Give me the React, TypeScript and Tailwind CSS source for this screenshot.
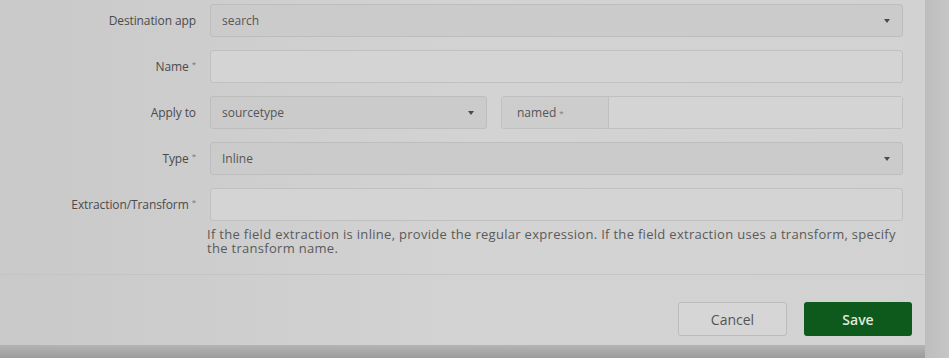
import React from "react";

function Caret() {
  return (
    <svg width="6" height="4" viewBox="0 0 6 4" className="shrink-0">
      <path d="M0 0 H6 L3 4 Z" fill="#4a4a4a" />
    </svg>
  );
}

function Req() {
  return <span className="ml-[3px] align-top text-[8px] text-[#777]">*</span>;
}

function Row({
  label,
  required,
  children,
  className = "",
}: {
  label: string;
  required?: boolean;
  children: React.ReactNode;
  className?: string;
}) {
  return (
    <div className={`flex items-center ${className}`}>
      <div className="w-[198px] shrink-0 pr-[2px] text-right text-[12px] tracking-[-0.1px] text-[#4b4b4b]">
        {label}
        {required && <Req />}
      </div>
      <div className="ml-[12px] flex-1">{children}</div>
    </div>
  );
}

function Select({ value, className = "" }: { value: string; className?: string }) {
  return (
    <div
      className={`flex h-[33px] items-center justify-between rounded-[3px] border border-[#bdbdbd] bg-[#cbcbcb] pl-[11px] pr-[12px] text-[12px] text-[#555] ${className}`}
    >
      <span>{value}</span>
      <Caret />
    </div>
  );
}

function Input() {
  return <div className="h-[33px] rounded-[3px] border border-[#c0c0c0] bg-[#d4d4d4]" />;
}

export default function App() {
  return (
    <div
      className="flex h-[358px] w-full bg-gradient-to-r from-[#c9c9c9] via-[#d3d3d3] to-[#d2d2d2]"
      style={{ fontFamily: "'Open Sans', Lato, sans-serif" }}
    >
      <div className="flex flex-1 flex-col">
        <div className="flex flex-col gap-[13px] pr-[22px] pt-[4px]">
          <Row label="Destination app">
            <Select value="search" />
          </Row>
          <Row label="Name" required>
            <Input />
          </Row>
          <Row label="Apply to">
            <div className="flex gap-[14px]">
              <Select value="sourcetype" className="w-[277px]" />
              <div className="flex h-[33px] flex-1 rounded-[3px] border border-[#c0c0c0]">
                <div className="flex w-[107px] items-center border-r border-[#c0c0c0] bg-[#cdcdcd] pl-[15px] text-[12px] text-[#555]">
                  named
                  <Req />
                </div>
                <div className="flex-1 bg-[#d4d4d4]" />
              </div>
            </div>
          </Row>
          <Row label="Type" required>
            <Select value="Inline" />
          </Row>
          <div>
            <Row label="Extraction/Transform" required>
              <Input />
            </Row>
            <p className="ml-[207px] mt-[6px] text-[13px] leading-[14px] tracking-[0.3px] text-[#5a5a5a]">
              If the field extraction is inline, provide the regular expression. If the field
              extraction uses a transform, specify
              <br />
              the transform name.
            </p>
          </div>
        </div>
        <div className="mt-[19px] border-t border-[#c4c4c4]" />
        <div className="flex flex-1 items-start justify-end gap-[17px] pr-[13px] pt-[27px]">
          <button className="h-[34px] w-[109px] rounded-[3px] border border-[#bcbcbc] bg-[#d6d6d6] text-[14px] text-[#555]">
            Cancel
          </button>
          <button className="h-[34px] w-[108px] rounded-[3px] bg-[#0e5a1c] text-[14px] font-semibold text-[#dfeadb]">
            Save
          </button>
        </div>
        <div className="h-[13px] bg-gradient-to-b from-[#b4b4b4] to-[#9c9c9c]" />
      </div>
      <div className="w-[24px] bg-gradient-to-r from-[#bdbdbd] to-[#c6c6c6]" />
    </div>
  );
}
